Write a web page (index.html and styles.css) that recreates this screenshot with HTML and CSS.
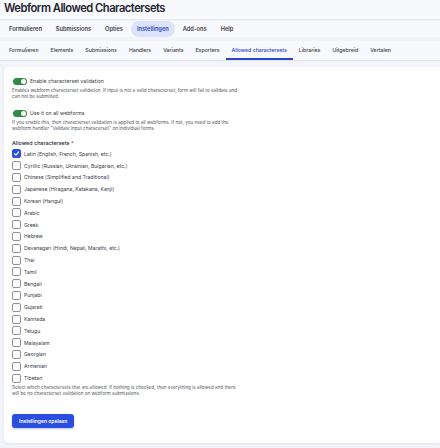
FILE: index.html
```html
<!DOCTYPE html>
<html lang="en">
<head>
    <meta charset="UTF-8">
    <title>Webform Allowed Charactersets</title>
    <link rel="stylesheet" href="styles.css">
</head>
<body>
    <header class="page-header">
        <h1>Webform Allowed Charactersets</h1>
    </header>
    <nav class="tabs-primary">
        <a href="#">Formulieren</a>
        <a href="#">Submissions</a>
        <a href="#">Opties</a>
        <a href="#" class="active">Instellingen</a>
        <a href="#">Add-ons</a>
        <a href="#">Help</a>
    </nav>
    <nav class="tabs-secondary">
        <a href="#">Formulieren</a>
        <a href="#">Elements</a>
        <a href="#">Submissions</a>
        <a href="#">Handlers</a>
        <a href="#">Variants</a>
        <a href="#">Exporters</a>
        <a href="#" class="active">Allowed charactersets</a>
        <a href="#">Libraries</a>
        <a href="#">Uitgebreid</a>
        <a href="#">Vertalen</a>
    </nav>

    <div class="content">
        <form class="card">
            <div class="form-item">
                <label class="toggle-row"><span class="toggle"></span>Enable characterset validation</label>
                <p class="description">Enables webform characterset validation. If input is not a valid characterset, form will fail to validate and can not be submitted.</p>
            </div>
            <div class="form-item">
                <label class="toggle-row"><span class="toggle"></span>Use it on all webforms</label>
                <p class="description">If you enable this, then characterset validation is applied to all webforms. If not, you need to add the webform handler "Validate input characerset" on individual forms.</p>
            </div>
            <div class="form-item">
                <div class="field-label">Allowed charactersets <span class="required">*</span></div>
                <div class="checkboxes" id="charsets"></div>
                <p class="description narrow">Select which charactersets that are allowed. If nothing is checked, then everything is allowed and there will be no characterset validation on webform submissions.</p>
            </div>
            <button type="button" class="button-primary">Instellingen opslaan</button>
        </form>
    </div>

    <script>
        // Build the list of character sets
        var charsets = [
            'Latin (English, French, Spanish, etc.)',
            'Cyrillic (Russian, Ukrainian, Bulgarian, etc.)',
            'Chinese (Simplified and Traditional)',
            'Japanese (Hiragana, Katakana, Kanji)',
            'Korean (Hangul)',
            'Arabic',
            'Greek',
            'Hebrew',
            'Devanagari (Hindi, Nepali, Marathi, etc.)',
            'Thai',
            'Tamil',
            'Bengali',
            'Punjabi',
            'Gujarati',
            'Kannada',
            'Telugu',
            'Malayalam',
            'Georgian',
            'Armenian',
            'Tibetan'
        ];
        var list = document.getElementById('charsets');
        charsets.forEach(function(name, i) {
            var row = document.createElement('label');
            row.className = 'checkbox-row';
            var box = document.createElement('span');
            box.className = i === 0 ? 'checkbox checked' : 'checkbox';
            if (i === 0) {
                box.innerHTML = '<svg viewBox="0 0 10 10" width="7" height="7"><path d="M2 5.2 L4.2 7.4 L8.2 2.6" fill="none" stroke="#fff" stroke-width="1.6" stroke-linecap="round" stroke-linejoin="round"/></svg>';
            }
            row.appendChild(box);
            row.appendChild(document.createTextNode(name));
            list.appendChild(row);
        });
    </script>
</body>
</html>
```

FILE: styles.css
```css
body {
    font-family: Inter, 'Noto Sans', sans-serif;
    background-color: #f3f4f9;
    color: #222330;
    margin: 0;
    padding: 0;
    height: 448px;
    overflow: hidden;
}
.page-header {
    background-color: #f8f9fc;
    height: 19px;
    box-shadow: 0 1px 2px rgba(0, 0, 0, 0.06);
    overflow: hidden;
}
.page-header h1 {
    margin: 0;
    padding-left: 4px;
    font-size: 11.2px;
    font-weight: 600;
    letter-spacing: -0.5px;
    line-height: 17px;
    color: #222330;
}
/* Primary tabs */
.tabs-primary {
    display: flex;
    align-items: center;
    height: 16px;
    margin-top: 2px;
    padding-left: 3px;
    gap: 2px;
    background-color: #f8f9fc;
}
.tabs-primary a {
    font-size: 5.7px;
    font-weight: 600;
    color: #3a3b48;
    text-decoration: none;
    padding: 4px 6px;
    border-radius: 8px;
    line-height: 8px;
}
.tabs-primary a.active {
    background-color: #dce2fa;
    color: #2a46c4;
}
/* Secondary tabs */
.tabs-secondary {
    display: flex;
    height: 19px;
    margin-top: 4px;
    padding-left: 3px;
    border-bottom: 1px solid #dfe1e8;
    background-color: #f8f9fc;
}
.tabs-secondary a {
    font-size: 5.2px;
    font-weight: 500;
    color: #3a3b48;
    text-decoration: none;
    padding: 0 6px;
    line-height: 18px;
    border-bottom: 2px solid transparent;
}
.tabs-secondary a.active {
    color: #2a46c4;
    border-bottom-color: #2a46c4;
}
.content {
    padding: 6px 0 0 4px;
    background-color: #f3f4f9;
}
.card {
    background-color: #fff;
    border-radius: 4px 0 0 4px;
    box-shadow: 0 1px 3px rgba(30, 40, 90, 0.08);
    padding: 9px 8px 15px 8px;
}
.form-item {
    margin-bottom: 8px;
}
.toggle-row {
    display: flex;
    align-items: center;
    font-size: 5.2px;
    color: #3a3b48;
    height: 10px;
}
.toggle {
    display: inline-block;
    position: relative;
    width: 14px;
    height: 7px;
    border-radius: 4px;
    background-color: #2f8a4c;
    margin: 0 3px 0 1px;
}
.toggle::after {
    content: '';
    position: absolute;
    right: 1px;
    top: 1px;
    width: 5px;
    height: 5px;
    border-radius: 50%;
    background-color: #fff;
}
.description {
    font-size: 4.6px;
    line-height: 6px;
    color: #555865;
    margin: 2px 0 0 0;
    max-width: 229px;
}
.description.narrow {
    max-width: 226px;
}
.form-item:nth-child(2) {
    margin-bottom: 7px;
}
.field-label {
    font-size: 5.4px;
    font-weight: 500;
    line-height: 8px;
    color: #222330;
    margin-bottom: 1px;
}
.required {
    color: #d72222;
}
.checkboxes {
    display: flex;
    flex-direction: column;
}
.checkbox-row {
    display: flex;
    align-items: center;
    height: 11.8px;
    font-size: 5.1px;
    color: #3a3b48;
}
.checkbox {
    display: inline-flex;
    align-items: center;
    justify-content: center;
    width: 7px;
    height: 7px;
    border: 1px solid #8e919d;
    border-radius: 2px;
    margin: 0 3px 0 0;
    background-color: #fff;
}
.checkbox.checked {
    background-color: #2a4fe0;
    border-color: #2a4fe0;
}
.checkboxes + .description {
    margin-top: 1px;
}
.button-primary {
    display: block;
    margin-top: 17px;
    padding: 0 7px;
    height: 14px;
    background-color: #2a4fe0;
    color: #fff;
    border: none;
    border-radius: 3px;
    font-family: Inter, sans-serif;
    font-size: 5px;
    font-weight: 600;
    box-shadow: 0 1px 2px rgba(42, 79, 224, 0.3);
}
```
